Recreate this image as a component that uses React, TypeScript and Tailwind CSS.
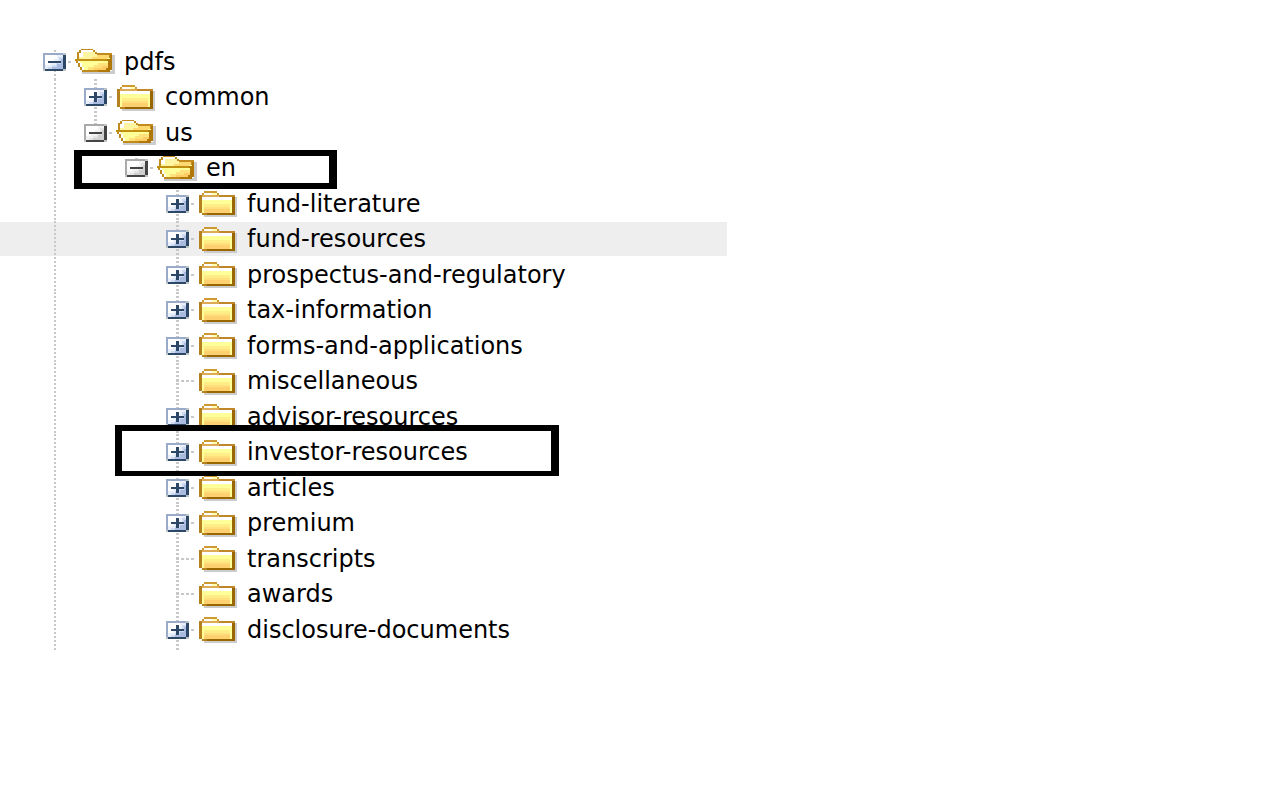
import { useState } from "react";
import clsx from "clsx";

type Guide = "none" | "full" | "top" | "bottom";

interface TreeRow {
  name: string;
  // one entry per indent column, the last one is the row's own column
  guides: Guide[];
  toggle?: "plus" | "minus" | "minus-gray";
  open?: boolean;
  frame?: string;
}

const child: Guide[] = ["full", "none", "none", "full"];

const rows: TreeRow[] = [
  { name: "pdfs", guides: ["bottom"], toggle: "minus", open: true },
  { name: "common", guides: ["full", "full"], toggle: "plus" },
  { name: "us", guides: ["full", "top"], toggle: "minus-gray", open: true },
  {
    name: "en",
    guides: ["full", "none", "top"],
    toggle: "minus-gray",
    open: true,
    frame: "left-[74px] w-[263px] top-0 h-[39px] border-x-8 border-y-6",
  },
  { name: "fund-literature", guides: child, toggle: "plus" },
  { name: "fund-resources", guides: child, toggle: "plus" },
  { name: "prospectus-and-regulatory", guides: child, toggle: "plus" },
  { name: "tax-information", guides: child, toggle: "plus" },
  { name: "forms-and-applications", guides: child, toggle: "plus" },
  { name: "miscellaneous", guides: child },
  { name: "advisor-resources", guides: child, toggle: "plus" },
  {
    name: "investor-resources",
    guides: child,
    toggle: "plus",
    frame: "left-[115px] w-[444px] -top-[9px] h-[51px] border-l-7 border-r-8 border-t-6 border-b-5",
  },
  { name: "articles", guides: child, toggle: "plus" },
  { name: "premium", guides: child, toggle: "plus" },
  { name: "transcripts", guides: child },
  { name: "awards", guides: child },
  { name: "disclosure-documents", guides: child, toggle: "plus" },
];

const guideStyles: Record<Guide, string> = {
  none: "hidden",
  full: "inset-y-0 group-last:-bottom-1",
  top: "top-0 bottom-1/2",
  bottom: "top-[6px] bottom-0",
};

function ToggleIcon({ kind }: { kind: "plus" | "minus" | "minus-gray" }) {
  const gray = kind === "minus-gray";
  const light = gray ? "#aaaaaa" : "#9aabc9";
  const dark = gray ? "#444444" : "#2c4866";
  const pale = gray ? "#f2f2f2" : "#eaf0fb";
  const mid = gray ? "#e4e4e4" : "#cddaf2";
  const low = gray ? "#cfcfcf" : "#a9bbdf";
  return (
    <svg width="23" height="18" viewBox="0 0 23 18" shapeRendering="crispEdges" aria-hidden="true">
      <rect width="23" height="18" fill="#ffffff" />
      <path d="M14 2h6v14H2v-4h5v-2h4V6h3z" fill={pale} />
      <path d="M16 4h4v12H5v-2h4v-2h4V8h3z" fill={mid} />
      <path d="M18 6h2v10H9v-2h5v-3h4z" fill={low} />
      <path d="M0 0h20v2H2v14H0z" fill={light} />
      <path d="M20 2h3v14h-3v2H2v-2h18z" fill={dark} />
      <path d="M20 0h3v2h-3zM0 16h2v2H0zM20 16h3v2h-3z" fill="#bcc4c4" />
      <path d="M5 8h13v2H5z" fill={dark} />
      {kind === "plus" && <path d="M10 4h3v10h-3z" fill={dark} />}
    </svg>
  );
}

function ClosedFolder() {
  return (
    <svg width="41" height="29" viewBox="-1 -2 41 29" shapeRendering="crispEdges" aria-hidden="true">
      <path d="M36 6h2v20H5v-2h31z" fill="#cccccc" />
      <path d="M5 0h13v2h2v3H3V2h2z" fill="#cc9933" />
      <path d="M5 2h8v3H5z" fill="#ffffff" />
      <path d="M13 2h5v2h-5z" fill="#ffffb0" />
      <path d="M0 4h36v20H3v-2H0z" fill="#b5811e" />
      <path d="M20 4h16v2H20z" fill="#bf862a" />
      <path d="M3 4h17v2H3z" fill="#ddaa55" />
      <path d="M33 6h3v18H8v-2h25z" fill="#996600" />
      <path d="M3 6h30v3H3z" fill="#ffffff" />
      <path d="M3 9h30v13H3z" fill="#ffff99" />
      <path d="M5 13h26v3H5z" fill="#ffee88" />
      <path d="M5 16h26v2H5z" fill="#ffe07c" />
      <path d="M5 18h26v4H5z" fill="#ffd070" />
    </svg>
  );
}

function OpenFolder() {
  return (
    <svg width="41" height="29" viewBox="1 -2 41 29" shapeRendering="crispEdges" aria-hidden="true">
      <path d="M38 6h3v19H8v-3h30z" fill="#cccccc" />
      <path d="M7 0h12v1h2v2h2v1h15v17h-2v2H8v-2H6v-3H4v-4H2v-2H0v-2h3V3h2V1h2z" fill="#c08a1e" />
      <path d="M7 1h12v2h2v2h2v1h12v4H5V4h2z" fill="#fff4a0" />
      <path d="M7 1h12v2H9v5H5V4h2z" fill="#ffffff" />
      <path d="M23 6h12v4H18V8h5z" fill="#ffd970" />
      <path d="M0 10h33v2H0z" fill="#c09010" />
      <path d="M4 12h29v-3h3v10h-2v2H8v-3H6v-4H4z" fill="#ffff99" />
      <path d="M4 12h2v2h2v4h2v3H8v-3H6v-4H4z" fill="#ffffff" />
      <path d="M24 14h10v5h-2v2H14v-3h6v-2h4z" fill="#ffe27c" />
      <path d="M28 17h6v2h-2v2H20v-2h8z" fill="#ffcc66" />
      <path d="M33 10h3v-4h2v15h-2v2H24v-2h8v-2h2v-7h-1z" fill="#b07808" />
    </svg>
  );
}

export default function App() {
  const [selected, setSelected] = useState("fund-resources");

  return (
    <main className="min-h-screen bg-white pt-11 font-['DejaVu_Sans',sans-serif] text-2xl text-black">
      <ul className="w-full max-w-[727px]">
        {rows.map((row) => (
          <li
            key={row.name}
            className="group relative flex h-[35px] items-center pl-[34px] even:h-9"
            onClick={() => setSelected(row.name)}
          >
            {selected === row.name && <span className="absolute inset-x-0 inset-y-px bg-[#eeeeee]" />}
            {row.guides.map((guide, i) => {
              const own = i === row.guides.length - 1;
              return (
                <div key={i} className="relative flex w-[41px] shrink-0 items-center justify-center self-stretch">
                  <span
                    className={clsx(
                      "absolute bg-[repeating-linear-gradient(to_bottom,#c8c8c8_0_2px,transparent_2px_4px)]",
                      i === 0 ? "left-5 w-0.5" : "left-[19px] w-[3px]",
                      guideStyles[guide]
                    )}
                  />
                  {own && (
                    <span className="absolute right-1 left-[19px] h-0.5 bg-[repeating-linear-gradient(to_right,#c8c8c8_0_3px,transparent_3px_5px)]" />
                  )}
                  {own && row.toggle && (
                    <button
                      type="button"
                      className="relative cursor-pointer"
                      aria-label={row.open ? "Collapse " + row.name : "Expand " + row.name}
                    >
                      <ToggleIcon kind={row.toggle} />
                    </button>
                  )}
                </div>
              );
            })}
            <div className="relative flex items-center gap-2">
              {row.open ? <OpenFolder /> : <ClosedFolder />}
              <span className="leading-8 whitespace-nowrap">{row.name}</span>
            </div>
            {row.frame && (
              <span className={clsx("pointer-events-none absolute z-10 border-black", row.frame)} />
            )}
          </li>
        ))}
      </ul>
    </main>
  );
}
